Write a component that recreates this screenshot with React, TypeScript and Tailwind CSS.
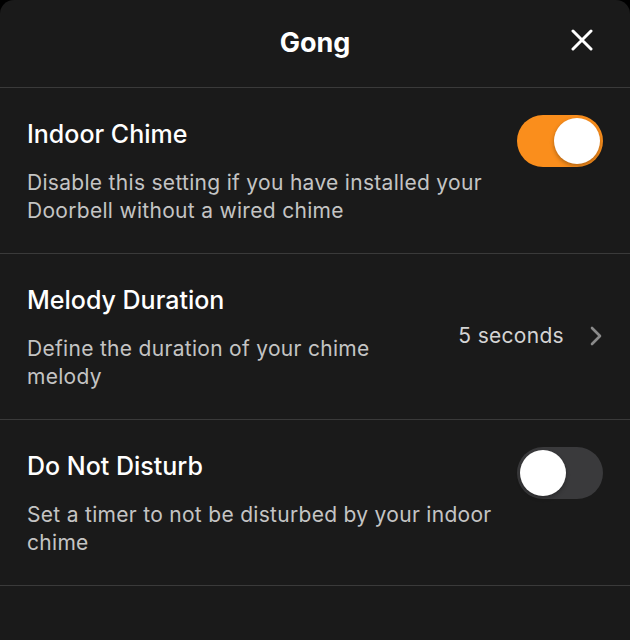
import { ReactNode } from 'react';

type Row = {
  id: string;
  title: string;
  description: string;
  control: 'switch-on' | 'switch-off' | 'link';
  value?: string;
};

const rows: Row[] = [
  {
    id: 'chime',
    title: 'Indoor Chime',
    description: 'Disable this setting if you have installed your Doorbell without a wired chime',
    control: 'switch-on',
  },
  {
    id: 'duration',
    title: 'Melody Duration',
    description: 'Define the duration of your chime melody',
    control: 'link',
    value: '5 seconds',
  },
  {
    id: 'dnd',
    title: 'Do Not Disturb',
    description: 'Set a timer to not be disturbed by your indoor chime',
    control: 'switch-off',
  },
];

function Switch({ on }: { on: boolean }) {
  return (
    <div
      className={
        on
          ? 'flex h-[52px] w-[86px] shrink-0 items-center justify-end rounded-full bg-[#fa8e1c] px-[3px]'
          : 'flex h-[52px] w-[86px] shrink-0 items-center justify-start rounded-full bg-[#3a3a3c] px-[3px]'
      }
    >
      <div className="h-[46px] w-[46px] rounded-full bg-white shadow-[0_2px_4px_rgba(0,0,0,0.3)]" />
    </div>
  );
}

function LinkValue({ value }: { value: string }) {
  return (
    <div className="flex shrink-0 items-center gap-[25px] self-center">
      <span className="text-[21px] leading-7 tracking-[0.3px] text-[#d4d4d4]">{value}</span>
      <svg width="14" height="22" viewBox="0 0 14 22" fill="none">
        <path d="M3 3l8 8-8 8" stroke="#8a8a8a" strokeWidth="2.6" strokeLinecap="round" strokeLinejoin="round" />
      </svg>
    </div>
  );
}

function SettingRow({ row }: { row: Row }) {
  let control: ReactNode = null;
  if (row.control === 'link') control = <LinkValue value={row.value ?? ''} />;
  else control = <Switch on={row.control === 'switch-on'} />;

  return (
    <div className="flex gap-4 border-b border-[#3a3a3a] pl-[27px] pr-[27px] pt-[27px] pb-[28px]">
      <div className="min-w-0 flex-1">
        <h3 className="mt-[5px] text-[25px] font-medium leading-7 text-white">{row.title}</h3>
        <p className="mt-[21px] text-[21px] leading-7 tracking-[0.3px] text-[#c4c4c4]">{row.description}</p>
      </div>
      {control}
    </div>
  );
}

export default function App() {
  return (
    <div className="h-[640px] bg-black" style={{ fontFamily: 'Inter, "Open Sans", sans-serif' }}>
      <div className="h-full overflow-hidden rounded-t-[14px] bg-[#1a1a1a]">
        <header className="relative flex h-[88px] items-center justify-center border-b border-[#3a3a3a]">
          <h1 className="text-[27px] font-bold text-white">Gong</h1>
          <button className="absolute right-[37px] top-[29px] flex h-[22px] w-[22px] items-center justify-center">
            <svg width="22" height="22" viewBox="0 0 22 22" fill="none">
              <path d="M2 2l18 18M20 2L2 20" stroke="white" strokeWidth="3" strokeLinecap="round" />
            </svg>
          </button>
        </header>
        {rows.map((row) => (
          <SettingRow key={row.id} row={row} />
        ))}
      </div>
    </div>
  );
}
